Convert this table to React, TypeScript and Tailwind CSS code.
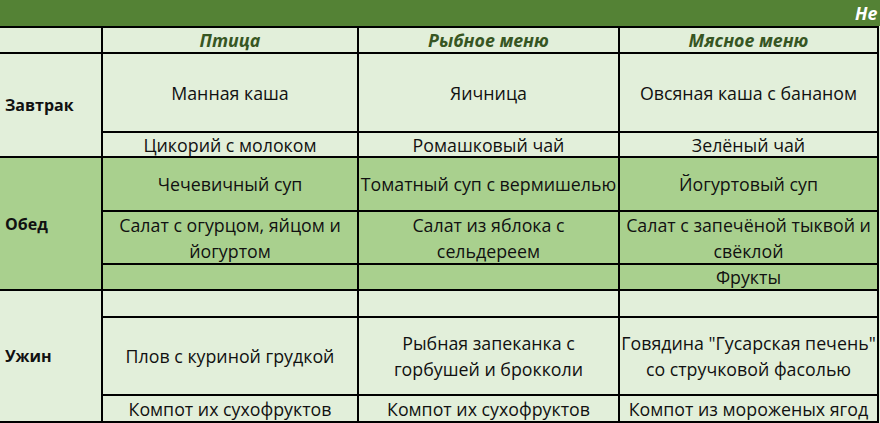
import React from "react";

const LIGHT = "bg-[#e2efda]";
const MID = "bg-[#a9d08e]";

function Cell({
  children,
  bg,
  className = "",
}: {
  children?: React.ReactNode;
  bg: string;
  className?: string;
}) {
  return (
    <div
      className={`${bg} flex items-center justify-center text-center leading-[26px] ${className}`}
    >
      {children}
    </div>
  );
}

export default function App() {
  return (
    <div
      className="w-[880px] h-[423px] overflow-hidden bg-[#e2efda] text-[17.8px] text-[#111]"
      style={{ fontFamily: '"Open Sans", "Noto Sans", sans-serif' }}
    >
      <div className="h-[26px] bg-[#548235] flex items-center overflow-hidden">
        <div className="ml-[855px] whitespace-nowrap font-bold italic text-white text-[17.8px]">
          Не
        </div>
      </div>
      <div
        className="grid bg-black gap-[2px] pt-[2px] pr-[2px] pb-[2px] w-[879px]"
        style={{
          gridTemplateColumns: "101px 254px 259px 257px",
          gridTemplateRows: "24px 77px 23px 52px 51px 24px 25px 76px 25px",
        }}
      >
        {/* header */}
        <Cell bg={LIGHT} />
        <Cell bg={LIGHT} className="font-bold italic text-[#375623]">Птица</Cell>
        <Cell bg={LIGHT} className="font-bold italic text-[#375623]">Рыбное меню</Cell>
        <Cell bg={LIGHT} className="font-bold italic text-[#375623]">Мясное меню</Cell>

        {/* Завтрак */}
        <Cell bg={LIGHT} className="row-span-2 !justify-start pl-[5px] font-bold text-[16px]">Завтрак</Cell>
        <Cell bg={LIGHT}>Манная каша</Cell>
        <Cell bg={LIGHT}>Яичница</Cell>
        <Cell bg={LIGHT}>Овсяная каша с бананом</Cell>
        <Cell bg={LIGHT}>Цикорий с молоком</Cell>
        <Cell bg={LIGHT}>Ромашковый чай</Cell>
        <Cell bg={LIGHT}>Зелёный чай</Cell>

        {/* Обед */}
        <Cell bg={MID} className="row-span-3 !justify-start pl-[5px] font-bold text-[16px]">Обед</Cell>
        <Cell bg={MID}>Чечевичный суп</Cell>
        <Cell bg={MID}>Томатный суп с вермишелью</Cell>
        <Cell bg={MID}>Йогуртовый суп</Cell>
        <Cell bg={MID}>
          Салат с огурцом, яйцом и
          <br />
          йогуртом
        </Cell>
        <Cell bg={MID}>
          Салат из яблока с
          <br />
          сельдереем
        </Cell>
        <Cell bg={MID}>
          Салат с запечёной тыквой и
          <br />
          свёклой
        </Cell>
        <Cell bg={MID} />
        <Cell bg={MID} />
        <Cell bg={MID}>Фрукты</Cell>

        {/* Ужин */}
        <Cell bg={LIGHT} className="row-span-3 !justify-start pl-[5px] font-bold text-[16px]">Ужин</Cell>
        <Cell bg={LIGHT} />
        <Cell bg={LIGHT} />
        <Cell bg={LIGHT} />
        <Cell bg={LIGHT}>Плов с куриной грудкой</Cell>
        <Cell bg={LIGHT}>
          Рыбная запеканка с
          <br />
          горбушей и брокколи
        </Cell>
        <Cell bg={LIGHT}>
          Говядина "Гусарская печень"
          <br />
          со стручковой фасолью
        </Cell>
        <Cell bg={LIGHT}>Компот их сухофруктов</Cell>
        <Cell bg={LIGHT}>Компот их сухофруктов</Cell>
        <Cell bg={LIGHT}>Компот из мороженых ягод</Cell>
      </div>
    </div>
  );
}
